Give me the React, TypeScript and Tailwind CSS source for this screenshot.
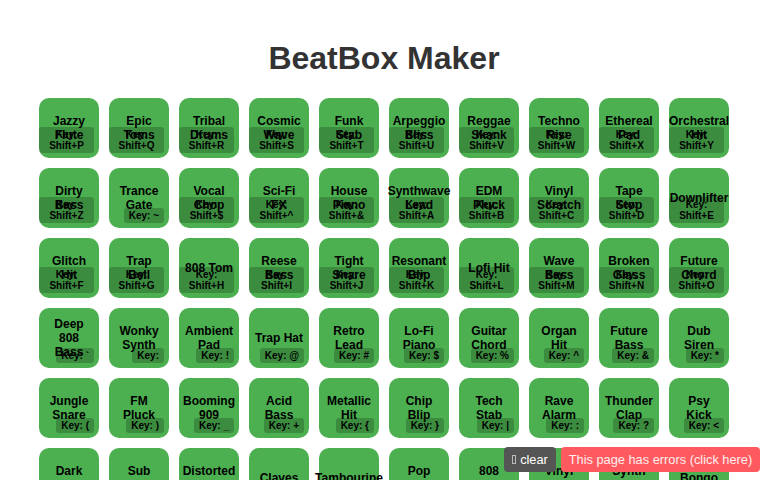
const pads: [string, string][] = [
   ["Jazzy Flute", "Shift+P"],
   ["Epic Toms", "Shift+Q"],
   ["Tribal Drums", "Shift+R"],
   ["Cosmic Wave", "Shift+S"],
   ["Funk Stab", "Shift+T"],
   ["Arpeggio Bliss", "Shift+U"],
   ["Reggae Skank", "Shift+V"],
   ["Techno Rise", "Shift+W"],
   ["Ethereal Pad", "Shift+X"],
   ["Orchestral Hit", "Shift+Y"],
   ["Dirty Bass", "Shift+Z"],
   ["Trance Gate", "~"],
   ["Vocal Chop", "Shift+$"],
   ["Sci-Fi FX", "Shift+^"],
   ["House Piano", "Shift+&"],
   ["Synthwave Lead", "Shift+A"],
   ["EDM Pluck", "Shift+B"],
   ["Vinyl Scratch", "Shift+C"],
   ["Tape Stop", "Shift+D"],
   ["Downlifter", "Shift+E"],
   ["Glitch Hit", "Shift+F"],
   ["Trap Bell", "Shift+G"],
   ["808 Tom", "Shift+H"],
   ["Reese Bass", "Shift+I"],
   ["Tight Snare", "Shift+J"],
   ["Resonant Blip", "Shift+K"],
   ["Lofi Hit", "Shift+L"],
   ["Wave Bass", "Shift+M"],
   ["Broken Glass", "Shift+N"],
   ["Future Chord", "Shift+O"],
   ["Deep 808 Bass", "`"],
   ["Wonky Synth", " "],
   ["Ambient Pad", "!"],
   ["Trap Hat", "@"],
   ["Retro Lead", "#"],
   ["Lo-Fi Piano", "$"],
   ["Guitar Chord", "%"],
   ["Organ Hit", "^"],
   ["Future Bass", "&"],
   ["Dub Siren", "*"],
   ["Jungle Snare", "("],
   ["FM Pluck", ")"],
   ["Booming 909", "_"],
   ["Acid Bass", "+"],
   ["Metallic Hit", "{"],
   ["Chip Blip", "}"],
   ["Tech Stab", "|"],
   ["Rave Alarm", ":"],
   ["Thunder Clap", "?"],
   ["Psy Kick", "<"],
   ["Dark Kick", ">"],
   ["Sub Drop", "/"],
   ["Distorted Kick", "\\"],
   ["Claves", "-"],
   ["Tambourine", "="],
   ["Pop Snare", "["],
   ["808 Snare", "]"],
   ["Vinyl Crackle", ";"],
   ["Synth Pluck", "'"],
   ["Bongo", ","],
];

function Pad({ name, keyLabel }: { name: string; keyLabel: string }) {
   return (
      <button className="relative flex h-[60px] w-[60px] items-center justify-center rounded-[10px] bg-[#4caf50] px-[5px] text-center text-[12px] font-bold text-black">
         {name}
         <span className="absolute right-[5px] bottom-[5px] rounded-[3px] bg-black/20 px-[5px] py-[2px] text-[10px]">
            Key: {keyLabel}
         </span>
      </button>
   );
}

export default function App() {
   return (
      <div className="flex h-screen flex-col items-center overflow-hidden bg-white pt-[40px] font-['Liberation_Sans',Arial,sans-serif] leading-[normal]">
         <h1 className="mb-[21px] text-[32px] font-bold text-[#333]">
            BeatBox Maker
         </h1>
         <div className="grid grid-cols-[repeat(10,60px)] gap-[10px]">
            {pads.map(([name, key]) => (
               <Pad key={name} name={name} keyLabel={key} />
            ))}
         </div>
         <div className="fixed top-[447px] right-[8px] flex gap-[5px] text-[12.8px]">
            <button className="flex h-[25px] w-[52px] items-center justify-center gap-[4px] rounded-[4px] bg-[#555] text-white">
               <span className="h-[9px] w-[4px] border border-white/60" />
               clear
            </button>
            <button className="h-[25px] w-[199px] rounded-[4px] bg-[#ff5a5f] text-white/90">
               This page has errors (click here)
            </button>
         </div>
      </div>
   );
}
